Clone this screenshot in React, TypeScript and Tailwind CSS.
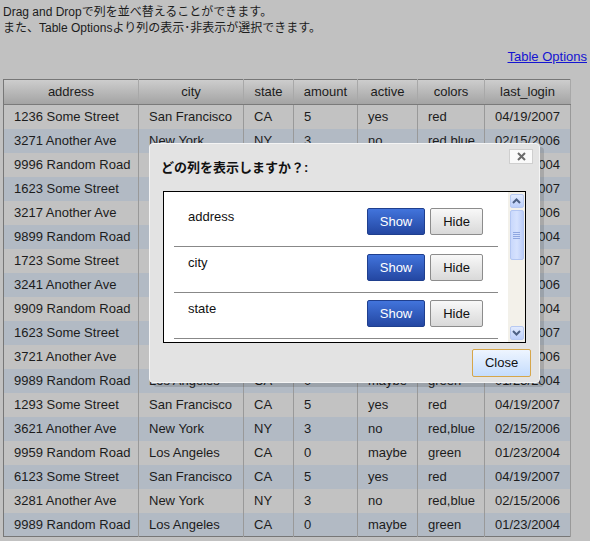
import React from 'react';

interface Row {
  address: string;
  city: string;
  state: string;
  amount: string;
  active: string;
  colors: string;
  lastLogin: string;
}

const sf = { city: 'San Francisco', state: 'CA', amount: '5', active: 'yes', colors: 'red', lastLogin: '04/19/2007' };
const ny = { city: 'New York', state: 'NY', amount: '3', active: 'no', colors: 'red,blue', lastLogin: '02/15/2006' };
const la = { city: 'Los Angeles', state: 'CA', amount: '0', active: 'maybe', colors: 'green', lastLogin: '01/23/2004' };

const rows: Row[] = [
  { address: '1236 Some Street', ...sf },
  { address: '3271 Another Ave', ...ny },
  { address: '9996 Random Road', ...la },
  { address: '1623 Some Street', ...sf },
  { address: '3217 Another Ave', ...ny },
  { address: '9899 Random Road', ...la },
  { address: '1723 Some Street', ...sf },
  { address: '3241 Another Ave', ...ny },
  { address: '9909 Random Road', ...la },
  { address: '1623 Some Street', ...sf },
  { address: '3721 Another Ave', ...ny },
  { address: '9989 Random Road', ...la },
  { address: '1293 Some Street', ...sf },
  { address: '3621 Another Ave', ...ny },
  { address: '9959 Random Road', ...la },
  { address: '6123 Some Street', ...sf },
  { address: '3281 Another Ave', ...ny },
  { address: '9989 Random Road', ...la },
];

const columns = [
  { key: 'address', label: 'address', width: 'w-[135px]' },
  { key: 'city', label: 'city', width: 'w-[105px]' },
  { key: 'state', label: 'state', width: 'w-[50px]' },
  { key: 'amount', label: 'amount', width: 'w-[64px]' },
  { key: 'active', label: 'active', width: 'w-[60px]' },
  { key: 'colors', label: 'colors', width: 'w-[67px]' },
  { key: 'lastLogin', label: 'last_login', width: 'w-[86px]' },
] as const;

const font = { fontFamily: '"Liberation Sans", "Noto Sans CJK JP", sans-serif' };

function Chevron({ up }: { up?: boolean }) {
  return (
    <svg width="9" height="6" viewBox="0 0 9 6">
      <polyline
        points={up ? '1,5 4.5,1.5 8,5' : '1,1 4.5,4.5 8,1'}
        fill="none"
        stroke="#4d6185"
        strokeWidth="2"
      />
    </svg>
  );
}

function ScrollBar() {
  return (
    <div className="w-[17px] bg-[#f3f1ea] flex flex-col items-center py-[2px]">
      <div className="w-[14px] h-[14px] rounded-[2px] border border-[#b8caf2] bg-gradient-to-b from-[#e2ebfe] to-[#bccffa] flex items-center justify-center">
        <Chevron up />
      </div>
      <div className="w-[14px] h-[50px] mt-[2px] rounded-[2px] border border-[#b3c6f2] bg-gradient-to-r from-[#c9d8fc] via-[#d6e2fe] to-[#bccdf8] flex flex-col items-center justify-center gap-[1px]">
        <div className="w-[7px] h-px bg-[#8fa7e0]" />
        <div className="w-[7px] h-px bg-[#8fa7e0]" />
        <div className="w-[7px] h-px bg-[#8fa7e0]" />
        <div className="w-[7px] h-px bg-[#8fa7e0]" />
      </div>
      <div className="flex-1" />
      <div className="w-[14px] h-[14px] rounded-[2px] border border-[#b8caf2] bg-gradient-to-b from-[#e2ebfe] to-[#bccffa] flex items-center justify-center">
        <Chevron />
      </div>
    </div>
  );
}

function OptionsDialog() {
  const items = ['address', 'city', 'state'];
  return (
    <div className="absolute left-[149px] top-[143px] w-[391px] h-[240px] bg-[#e3e3e3] border border-[#f4f4f4] rounded-[4px] shadow-[4px_4px_0_rgba(0,0,0,0.13)] flex flex-col">
      <div className="flex justify-between pl-[11px] pr-[6px]">
        <div className="pt-[15px] text-[13px] leading-[18px] font-bold text-[#111]" style={font}>
          どの列を表示しますか？:
        </div>
        <button className="mt-[5px] w-[24px] h-[15px] bg-[#fafafa] border border-[#cfcfcf] flex items-center justify-center">
          <svg width="9" height="9" viewBox="0 0 9 9">
            <path d="M1 1 L8 8 M8 1 L1 8" stroke="#6a6a6a" strokeWidth="2" />
          </svg>
        </button>
      </div>

      <div className="mt-[14px] mx-[13px] h-[152px] border border-black bg-white flex overflow-hidden">
        <div className="flex-1 pt-[9px] overflow-hidden">
          {items.map((name) => (
            <div key={name} className="mx-[10px] border-b border-[#888] pt-[7px] pb-[11px] flex items-start">
              <div className="flex-1 pl-[14px] pt-[1px] text-[13px] leading-[16px] text-[#111]" style={font}>
                {name}
              </div>
              <button
                className="w-[58px] h-[27px] rounded-[2px] border border-[#1f3f8e] bg-gradient-to-b from-[#4274dc] to-[#2447a2] text-white text-[13px]"
                style={font}
              >
                Show
              </button>
              <button
                className="ml-[5px] mr-[15px] w-[53px] h-[27px] rounded-[2px] border border-[#8c8c8c] bg-gradient-to-b from-[#f8f8f8] to-[#d9d9d9] text-[#111] text-[13px]"
                style={font}
              >
                Hide
              </button>
            </div>
          ))}
        </div>
        <ScrollBar />
      </div>

      <div className="flex justify-end pr-[8px] mt-[6px]">
        <button
          className="w-[59px] h-[28px] rounded-[2px] border border-[#d6a64a] bg-gradient-to-b from-[#eef5ff] to-[#c4dcfd] text-[#111] text-[13px]"
          style={font}
        >
          Close
        </button>
      </div>
    </div>
  );
}

export default function App() {
  return (
    <div className="relative w-[590px] h-[541px] bg-[#c1c1c1] overflow-hidden text-[#1c1c1c]" style={font}>
      <div className="pt-[4px] px-[3px] text-[12px] leading-[16px]">
        <p>Drag and Dropで列を並べ替えることができます。</p>
        <p>また、Table Optionsより列の表示･非表示が選択できます。</p>
      </div>
      <div className="mt-[13px] pr-[3px] text-right text-[13px] leading-[16px]">
        <a href="#" className="text-[#1414d2] underline">
          Table Options
        </a>
      </div>

      <table className="mt-[14px] ml-[3px] w-[568px] table-fixed border-collapse border border-[#777] text-[13px]">
        <colgroup>
          {columns.map((c) => (
            <col key={c.key} className={c.width} />
          ))}
        </colgroup>
        <thead>
          <tr className="h-[25px] bg-gradient-to-b from-[#cdcdcd] to-[#a2a2a2]">
            {columns.map((c) => (
              <th
                key={c.key}
                className="font-normal text-center p-0 border-b border-b-[#7a7a7a] border-r border-r-[#a8a8a8]"
              >
                {c.label}
              </th>
            ))}
          </tr>
        </thead>
        <tbody>
          {rows.map((r, i) => (
            <tr key={i} className={`h-[24px] ${i % 2 === 0 ? 'bg-[#c2c2c2]' : 'bg-[#b2bac4]'}`}>
              {columns.map((c) => (
                <td key={c.key} className="pl-[10px] p-0 whitespace-nowrap border-r border-r-[#999]">
                  {r[c.key]}
                </td>
              ))}
            </tr>
          ))}
        </tbody>
      </table>

      <OptionsDialog />
    </div>
  );
}
